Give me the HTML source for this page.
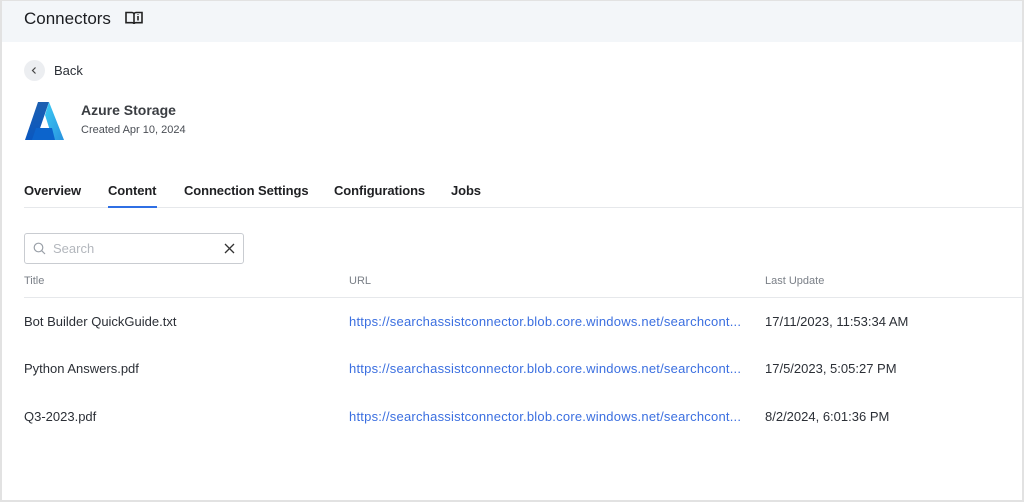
<!DOCTYPE html>
<html><head><style>
*{margin:0;padding:0;box-sizing:border-box}
body{width:1024px;height:502px;background:#fff;font-family:"Liberation Sans",sans-serif;color:#202124;position:relative;overflow:hidden}
.frame{position:absolute;left:0;top:0;width:1024px;height:502px;border:2px solid #e2e2e2;border-top-width:1px;border-right-width:2px;border-bottom-width:2px}
.hdr{position:absolute;left:2px;top:1px;width:1020px;height:41px;background:#f3f6f9}
.a{position:absolute;white-space:nowrap}
.tab{position:absolute;top:183px;font-size:13px;font-weight:bold;color:#202124;letter-spacing:-0.1px}
.th{position:absolute;top:274px;font-size:11px;color:#7a7f87}
.td{position:absolute;font-size:13px;color:#2b2f36}
.url{color:#3b6fe0;letter-spacing:0.22px}
</style></head><body>
<div class="hdr"></div>
<div class="a" style="left:24px;top:9px;font-size:17px;color:#1b1d21">Connectors</div>
<svg class="a" style="left:125px;top:11px" width="18" height="14" viewBox="0 0 18 14"><path d="M1 1.5h6c1 0 2 .8 2 2V13c0-.8-1-1.3-2-1.3H1z M17 1.5h-6c-1 0-2 .8-2 2V13c0-.8 1-1.3 2-1.3h6z" fill="none" stroke="#222" stroke-width="1.6"/><path d="M13 5v4.5M13 3.3v.6" stroke="#222" stroke-width="1.6"/></svg>
<div class="a" style="left:24px;top:60px;width:21px;height:21px;border-radius:50%;background:#eceef1"></div>
<svg class="a" style="left:30px;top:66px" width="9" height="9" viewBox="0 0 9 9"><path d="M5.5 1.5L2.5 4.5l3 3" fill="none" stroke="#444" stroke-width="1.2"/></svg>
<div class="a" style="left:54px;top:63px;font-size:13px;color:#2b2f36">Back</div>
<svg class="a" style="left:24px;top:101px" width="42" height="40" viewBox="0 0 42 40">
<defs><linearGradient id="g1" x1="0" y1="0" x2="0" y2="1"><stop offset="0" stop-color="#1d5fb0"/><stop offset="1" stop-color="#0a58c0"/></linearGradient><linearGradient id="g2" x1="0" y1="0" x2="1" y2="1"><stop offset="0" stop-color="#3ccbf4"/><stop offset="1" stop-color="#2892df"/></linearGradient></defs>
<path d="M14 1h11L12 39H1z" fill="url(#g1)"/>
<path d="M25 1l15 38H29L21 14z" fill="url(#g2)"/>
<path d="M12 27h16l3 12H8z" fill="#0c64cc"/>
</svg>
<div class="a" style="left:81px;top:102px;font-size:14px;font-weight:bold;color:#3a3d42">Azure Storage</div>
<div class="a" style="left:81px;top:124px;font-size:11px;color:#4a4e55">Created Apr 10, 2024</div>
<div class="tab" style="left:24px">Overview</div>
<div class="tab" style="left:108px">Content</div>
<div class="tab" style="left:184px">Connection Settings</div>
<div class="tab" style="left:334px">Configurations</div>
<div class="tab" style="left:451px">Jobs</div>
<div class="a" style="left:24px;top:207px;width:998px;height:1px;background:#e6e8eb"></div>
<div class="a" style="left:108px;top:206px;width:49px;height:2px;background:#2f6fe4"></div>
<div class="a" style="left:24px;top:233px;width:220px;height:31px;border:1px solid #c9ccd1;border-radius:3px"></div>
<svg class="a" style="left:33px;top:242px" width="13" height="13" viewBox="0 0 13 13"><circle cx="5.5" cy="5.5" r="4.3" fill="none" stroke="#9aa0a8" stroke-width="1.2"/><path d="M8.7 8.7l3.3 3.3" stroke="#9aa0a8" stroke-width="1.2"/></svg>
<div class="a" style="left:53px;top:241px;font-size:13px;color:#b3b7bd">Search</div>
<svg class="a" style="left:224px;top:243px" width="11" height="11" viewBox="0 0 11 11"><path d="M1 1l9 9M10 1l-9 9" stroke="#333" stroke-width="1.3"/></svg>
<div class="th" style="left:24px;top:275px">Title</div>
<div class="th" style="left:349px;top:275px">URL</div>
<div class="th" style="left:765px;top:275px">Last Update</div>
<div class="a" style="left:24px;top:297px;width:998px;height:1px;background:#e6e8eb"></div>
<div class="td" style="left:24px;top:314px">Bot Builder QuickGuide.txt</div>
<div class="td url" style="left:349px;top:314px">https://searchassistconnector.blob.core.windows.net/searchcont...</div>
<div class="td" style="left:765px;top:314px">17/11/2023, 11:53:34 AM</div>
<div class="td" style="left:24px;top:361px">Python Answers.pdf</div>
<div class="td url" style="left:349px;top:361px">https://searchassistconnector.blob.core.windows.net/searchcont...</div>
<div class="td" style="left:765px;top:361px">17/5/2023, 5:05:27 PM</div>
<div class="td" style="left:24px;top:409px">Q3-2023.pdf</div>
<div class="td url" style="left:349px;top:409px">https://searchassistconnector.blob.core.windows.net/searchcont...</div>
<div class="td" style="left:765px;top:409px">8/2/2024, 6:01:36 PM</div>
<div class="frame"></div>
</body></html>
